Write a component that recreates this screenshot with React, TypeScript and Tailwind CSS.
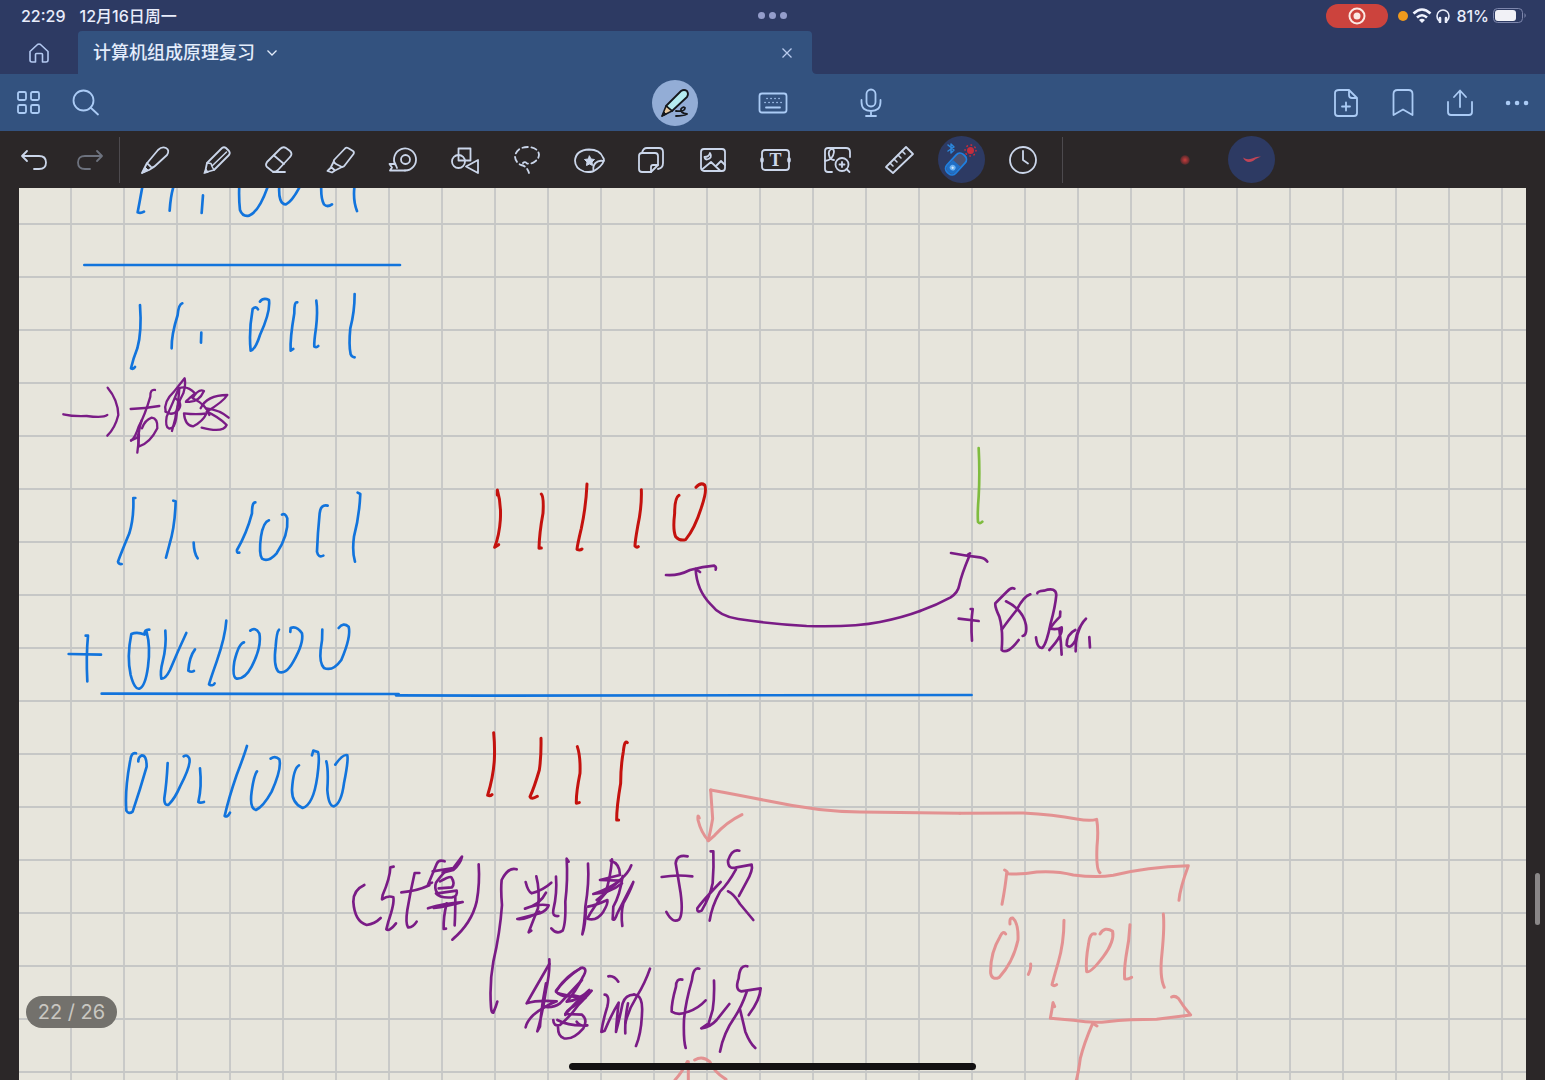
// Note taking screen: status bar, document tab, toolbars and a grid paper page with ink

import type { ReactNode } from "react";

const BLUE = "#1274dc";
const RED = "#c4120e";
const PURPLE = "#7a1c86";
const PINK = "#e39292";
const GREEN = "#7fbc3f";

// Each group of strokes has its own origin on the paper; three units are one pixel
const ink = [
  {
    x: 31,
    y: -3,
    color: BLUE,
    width: 8,
    paths: [
      "M278 0 Q270 45 263 82 Q272 86 282 80",
      "M372 0 Q362 30 359 77",
      "M459 31 L455 84",
      "M568 0 Q566 40 570 75 Q578 96 597 92 Q628 80 655 0",
      "M688 0 Q684 58 708 58 Q728 48 752 0",
      "M814 0 Q812 40 822 58 Q832 68 846 58",
      "M914 0 Q908 45 921 78",
      "M103 240 L1050 240",
      "M270 360 Q276 440 262 490 Q250 520 243 550 Q250 554 255 546",
      "M397 355 Q386 358 383 390 Q364 450 365 490",
      "M454 443 L453 473",
      "M624 373 Q618 362 608 372 Q596 440 602 497 Q616 494 630 450 Q662 380 657 345 Q640 337 630 350",
      "M742 352 Q732 350 733 385 Q720 460 722 497 L730 492",
      "M799 347 Q804 380 798 430 Q792 470 793 485 Q800 489 805 483",
      "M914 327 Q914 380 901 430 Q896 480 902 508 Q906 517 914 517",
    ],
  },
  {
    x: 31,
    y: -3,
    color: PURPLE,
    width: 7,
    paths: [
      "M40 688 Q70 695 110 693 Q160 700 172 690",
      "M173 608 Q204 645 205 690 Q195 730 172 752",
      "M242 672 Q285 670 328 663",
      "M315 615 Q300 612 301 635 Q285 690 266 725 Q255 760 243 767",
      "M243 766 L262 758 Q272 720 262 803",
      "M275 706 Q262 745 266 785 Q300 775 322 730 Q324 700 305 698 Q285 705 276 730",
      "M347 680 Q340 650 372 620 L404 580 Q408 600 400 625 Q378 665 376 700 L366 738",
      "M347 680 Q365 695 385 675 Q400 655 376 640",
      "M386 610 Q370 650 350 695 Q345 725 356 730 Q375 735 380 690 Q386 640 388 612",
      "M386 610 Q412 600 435 625 Q400 655 410 650 Q445 655 462 618 Q445 610 428 640 Q470 660 478 690",
      "M402 685 Q405 722 430 724 Q458 710 470 685 Q440 690 402 685",
      "M452 670 Q470 630 532 630 Q520 650 470 680 Q505 695 530 720 Q520 745 455 728",
      "M470 670 Q510 675 536 698",
    ],
  },
  {
    x: 31,
    y: 282,
    color: BLUE,
    width: 8,
    paths: [
      "M256 84 L250 84 Q252 145 238 190 Q215 245 204 275 Q206 284 215 282",
      "M370 92 L377 94 Q375 170 358 225 L348 263",
      "M431 218 Q432 250 443 265",
      "M616 97 Q606 96 606 130 Q590 190 561 240 Q560 250 568 248",
      "M657 151 Q640 156 633 200 Q626 250 636 266 Q655 278 680 250 Q716 195 712 145 Q706 128 696 134",
      "M833 107 Q812 102 809 130 Q803 190 801 245 Q805 264 820 257",
      "M923 68 L931 72 Q928 140 912 200 Q906 245 915 275",
      "M56 552 L153 554",
      "M107 497 L114 497 Q108 560 112 634",
      "M298 479 Q282 478 284 494 Q262 484 244 492 Q230 560 242 615 Q254 660 268 656 Q286 650 294 590 Q302 530 290 486",
      "M346 482 Q350 530 338 575 Q330 605 334 626 Q346 628 360 600 Q385 540 409 489",
      "M435 538 Q418 560 415 602 Q424 608 432 603",
      "M529 452 Q526 500 500 575 Q484 620 477 643 Q488 650 494 640",
      "M582 517 Q566 520 553 575 Q546 622 560 626 Q585 628 605 590 Q636 530 628 490 Q616 470 601 482",
      "M687 479 Q680 485 677 530 Q670 585 684 604 Q706 618 730 575 Q762 520 756 490 Q740 466 722 474 L721 486",
      "M817 479 Q818 510 812 540 Q808 580 822 594 Q848 606 874 570 Q904 500 896 470 Q880 456 866 474",
      "M155 671 L1046 672",
      "M1038 676 L1300 677 L2765 675",
      "M258 850 Q244 846 241 870 Q224 960 229 1022 Q236 1034 248 1025 Q270 960 290 890 Q290 855 275 856 Q264 862 265 874",
      "M353 879 Q350 940 343 985 Q342 1008 356 1004 Q375 985 390 950 Q424 885 418 865 Q412 852 401 859",
      "M450 895 Q456 950 445 996 Q450 1000 462 996",
      "M591 828 Q585 850 560 915 Q536 985 524 1038 Q532 1044 540 1028",
      "M621 904 Q612 915 605 965 Q598 1016 618 1020 Q640 1010 665 965 Q696 895 688 868 Q676 856 662 866",
      "M747 886 Q730 895 726 960 Q726 1000 758 1014 Q790 1005 802 920 Q810 860 804 846 L790 842 L786 856",
      "M829 874 Q836 900 832 960 Q836 1010 852 1009 Q874 1000 882 940 Q896 870 892 856 Q880 850 856 884",
    ],
  },
  {
    x: 451,
    y: 282,
    color: RED,
    width: 9,
    paths: [
      "M82 75 L82 60 Q94 100 91 150 Q88 195 74 232 L86 224",
      "M214 72 Q222 80 219 130 Q208 190 207 235 L214 234",
      "M351 42 Q348 110 334 175 Q322 225 321 238 Q330 242 336 237",
      "M514 59 Q516 110 503 170 Q495 215 495 228 Q500 234 505 230",
      "M627 76 Q614 84 614 130 Q608 180 617 200 Q630 214 647 209 Q675 175 695 110 Q712 60 704 45 Q692 36 678 52",
      "M71 788 Q75 830 73 870 Q70 920 53 976 Q60 980 66 974",
      "M213 805 Q214 860 208 900 Q192 955 180 980 Q184 990 202 979",
      "M322 830 Q332 860 330 910 Q318 970 319 1000 L328 998",
      "M472 818 Q464 808 460 845 Q452 890 452 940 Q440 1010 440 1050 L446 1050",
    ],
  },
  {
    x: 451,
    y: 282,
    color: PURPLE,
    width: 8,
    paths: [
      "M588 315 Q625 318 660 300 Q700 290 733 287 Q740 290 737 299",
      "M690 306 L677 297 Q680 360 722 403 Q750 440 805 447 Q900 462 1010 468 Q1150 472 1230 456 Q1300 442 1350 423",
    ],
  },
  {
    x: 901,
    y: 242,
    color: PURPLE,
    width: 8,
    paths: [
      "M0 543 Q50 525 92 502 Q114 488 118 465 Q124 435 148 378",
      "M93 369 Q140 378 180 382 Q196 385 202 395",
      "M144 374 L150 370",
      "M116 566 Q150 570 176 573",
      "M152 537 L158 537 Q152 580 156 632",
      "M283 476 Q274 470 262 484 L226 520 Q224 530 238 560 Q250 600 245 660 Q262 675 296 630",
      "M258 514 Q310 540 318 585 Q322 615 308 618",
      "M331 493 Q310 500 290 540 Q262 575 246 598",
      "M352 490 Q352 484 372 482 Q408 470 409 495 Q406 530 392 580 Q380 640 368 653 Q352 658 348 622",
      "M421 545 L420 560 Q400 580 390 596 Q412 600 425 592 Q430 615 388 660 M418 598 Q424 640 425 674",
      "M466 600 Q440 612 440 645 Q450 660 466 632 Q474 590 498 566 Q482 580 472 615 Q466 640 467 664",
      "M508 621 L510 652",
    ],
  },
  {
    x: 901,
    y: 242,
    color: GREEN,
    width: 8,
    paths: ["M176 54 Q180 130 176 200 Q172 250 174 276 Q180 283 187 275"],
  },
  {
    x: 321,
    y: 652,
    color: PURPLE,
    width: 8,
    paths: [
      "M73 135 Q40 150 40 185 Q44 245 80 255 Q104 252 122 234",
      "M161 80 L151 82 Q150 115 128 165 L126 178 Q145 165 160 172 Q164 190 145 245 L139 268 Q148 276 168 250",
      "M238 99 L224 99 Q212 150 202 210 Q196 250 204 262 Q218 264 230 245",
      "M184 157 Q230 154 268 136",
      "M314 64 Q296 58 290 72 L264 134 L276 128",
      "M278 94 L340 84 L366 50 Q362 70 340 90 L308 98",
      "M322 88 Q300 110 288 128 Q282 145 292 160 L350 152 Q354 170 336 172 Q300 175 288 160",
      "M300 124 Q330 108 334 112 Q346 130 336 142 L296 145",
      "M264 205 Q310 190 368 186 Q320 200 282 204",
      "M320 190 Q310 230 311 267 L318 266 M346 172 Q346 220 344 256",
      "M416 73 Q420 130 410 185 Q395 250 337 299 L346 290",
      "M530 88 Q505 80 485 120 Q482 150 486 195 Q480 280 460 365 Q448 430 453 500 Q454 520 460 518 Q468 500 472 485",
      "M557 126 Q564 155 575 160 Q610 150 634 128",
      "M589 109 Q600 150 594 205 L566 277 L574 272",
      "M555 206 Q600 195 618 158 M555 206 Q595 190 626 196 Q622 210 600 220 L532 237 Q560 240 598 215",
      "M648 110 Q652 160 640 210 Q636 230 655 228",
      "M686 65 L680 56 Q684 120 676 185 Q678 250 668 272 Q650 285 634 265",
      "M628 358 Q630 400 618 450 Q608 520 592 574 L600 560 Q604 500 618 430",
      "M628 372 Q600 420 560 490 Q590 480 650 484 Q610 500 580 525 Q560 545 557 562",
      "M722 384 Q670 420 648 455 Q670 475 700 466 L736 474",
      "M610 500 Q640 505 660 490 L726 420",
      "M640 540 Q640 560 660 555 Q690 530 715 495 Q740 470 755 452",
    ],
  },
  {
    x: 541,
    y: 652,
    color: PURPLE,
    width: 8,
    paths: [
      "M84 71 Q88 130 76 200 Q74 250 67 283 Q76 260 78 205",
      "M156 58 Q152 110 136 160 Q100 200 82 236 Q110 245 130 215 Q145 190 142 180 Q110 195 84 200",
      "M152 62 Q180 70 180 105 L120 120 L180 122 Q140 150 100 162 Q150 160 186 130",
      "M214 76 Q205 100 180 120 Q150 150 110 180",
      "M188 108 Q180 165 160 200 L158 238 Q164 244 172 220 L220 126 Q210 155 190 190 Q182 220 187 258",
      "M305 111 Q350 103 397 109",
      "M383 49 Q350 42 347 70 Q354 110 362 160 Q370 220 358 238 Q338 252 319 216",
      "M452 34 L460 34 Q462 80 458 130 Q450 170 425 212 Q410 220 412 205 Q430 180 482 126",
      "M538 32 Q516 26 504 62 Q504 90 530 82 L575 74 Q580 90 560 125 L537 168",
      "M528 88 Q505 130 480 155 Q455 200 449 242",
      "M504 154 Q520 160 540 192 L580 240",
      "M-12 452 Q20 405 66 383 Q85 385 68 412 Q50 450 20 485 Q60 480 88 450 Q70 480 40 500 Q20 510 16 525",
      "M-6 460 L60 475 L16 522 L66 524 Q84 540 70 565 Q40 600 12 595 Q-6 590 -6 562",
      "M-8 540 Q30 560 82 556 Q60 560 50 545",
      "M145 409 Q162 406 175 425",
      "M134 464 Q150 465 142 500 Q128 545 124 576 L134 572 Q156 520 176 488 Q170 540 168 576 Q180 530 188 490 Q196 465 222 464",
      "M204 490 Q194 540 196 580",
      "M270 386 Q255 430 230 470 Q205 510 196 550",
      "M222 464 Q250 465 246 520 Q244 580 228 618",
      "M367 419 Q348 414 348 440 Q334 490 335 515 Q355 528 385 515 Q415 505 437 481",
      "M418 386 Q400 380 396 420 Q376 490 372 540 Q370 600 377 624",
      "M462 422 Q464 470 458 510 L446 550 L424 565 Q450 562 470 540 L508 492",
      "M562 379 Q540 372 536 415 Q524 450 544 454 L602 445 Q600 480 566 525",
      "M560 456 Q545 500 525 530 Q490 580 480 635",
      "M540 508 Q548 540 556 575 Q570 610 586 624",
    ],
  },
  {
    x: 541,
    y: 652,
    color: PINK,
    width: 9,
    paths: [
      "M345 720 Q364 700 382 665",
      "M385 665 L385 720",
      "M404 660 Q428 646 450 666 Q462 696 498 718",
      "M452 -150 L458 -64 Q450 -18 444 2",
      "M418 -66 Q412 -80 414 -60 Q424 -20 446 2 L464 -14 Q500 -54 546 -76",
      "M452 -150 Q530 -136 630 -116 Q780 -84 900 -84 L1200 -80",
    ],
  },
  {
    x: 941,
    y: 592,
    color: PINK,
    width: 9,
    paths: [
      "M0 100 L190 99 Q280 104 350 117 Q390 124 410 118 Q416 150 411 200 Q408 270 420 278",
      "M134 270 Q144 275 142 281 Q180 285 230 276 Q290 272 340 285 Q410 294 460 286 Q560 260 685 257 Q660 325 657 361",
      "M140 280 Q136 320 126 373",
      "M137 462 Q130 450 120 470 Q90 520 92 580 Q96 602 118 592 Q160 545 174 480 Q176 430 158 414 Q148 412 150 432",
      "M212 552 Q214 565 205 583",
      "M312 421 Q312 490 294 550 Q282 590 276 614 Q282 620 290 614",
      "M406 462 Q390 456 386 490 Q376 545 380 575 Q392 580 430 530 Q464 485 458 454 Q434 438 420 462",
      "M510 434 Q508 480 498 530 Q492 570 494 596 Q500 600 515 592",
      "M610 402 Q614 440 606 520 Q598 590 613 622",
      "M284 680 L279 668 Q276 690 271 715 L340 721 Q400 730 440 725 Q510 718 590 718 L692 705 Q670 680 655 655 Q645 646 635 651",
      "M411 738 L398 730 Q372 790 361 835 Q355 880 348 905",
    ],
  },
];

// Line icon on a 28px box
function Icon({ children, className = "" }: { children: ReactNode; className?: string }) {
  return (
    <svg
      viewBox="0 0 28 28"
      className={`size-7 overflow-visible ${className}`}
      fill="none"
      stroke="currentColor"
      strokeWidth={1.8}
      strokeLinecap="round"
      strokeLinejoin="round"
      aria-hidden
    >
      {children}
    </svg>
  );
}

const tools = [
  {
    name: "钢笔",
    icon: (
      <>
        <path d="M7 16 17 4q4-4 8-2t1 7L14 20q-2 2-4 1l-2-2q-2-1-1-3Z" />
        <path d="m6 17-2 4-3 6 7-3 4-2.500" />
        <path d="m1 27 3-6 3 3Z" fill="currentColor" strokeWidth={1} />
      </>
    ),
  },
  {
    name: "铅笔",
    icon: (
      <>
        <path d="M4 17 19 2q2-1.500 4 0l3 3q1.500 2 0 4L11 24l-9 2.500Z" />
        <path d="m4 17 4 .5 1 3 2 3.500M9 20 23.500 6" strokeWidth={1.5} />
        <path d="m1 27 2-4 2 3Z" fill="currentColor" strokeWidth={1} />
      </>
    ),
  },
  {
    name: "橡皮",
    icon: (
      <>
        <path d="M2 16 15 3q3-3 6-1l4 3q3 3 0 6L13 24q-3 3-6 1l-5-4q-2-2 0-5Z" />
        <path d="m9 9.500 10 8.500M8 26h12" />
      </>
    ),
  },
  {
    name: "荧光笔",
    icon: (
      <>
        <path d="M7 14 18 2.500q1.500-1.500 3-.5l5 3q1.500 1 .5 3L18 19q-1 2-3 2l-6-3q-3-1.500-2-4Z" />
        <path d="m6.500 16-2.500 5 4 3.500 7-3.500M4 21.500.5 25l4.500 1.500L8 24.500" />
      </>
    ),
  },
  {
    name: "胶带",
    icon: (
      <>
        <path d="M16 24.500H1l2-3-2.500-3.500H6" />
        <path d="M6.500 19A11 11 0 1 1 16 24.500M6 17l2 5" />
        <circle cx="16.500" cy="13.500" r="4.500" />
      </>
    ),
  },
  {
    name: "形状",
    icon: (
      <>
        <path d="M7.500 2.500h12v12h-12Z" />
        <circle cx="7.500" cy="15.500" r="6.500" />
        <path d="m15 20.500 12-6.500v13Z" />
      </>
    ),
  },
  {
    name: "套索",
    icon: (
      <path
        d="M10 17q2-2 4 .5 5 .5 8-2 4-3 4-7-1-7-11-7.500Q4 1 2 10q0 6 6 9 6 1 8 8"
        strokeDasharray="5.500 3.500"
      />
    ),
  },
  {
    name: "贴纸",
    icon: (
      <>
        <path d="M18 25.500q-5 1-9 0-9-3-9-11Q1 4 14 3.500q11 0 14 8 1 1 1 3-2 6-11 11Z" />
        <path d="M18.500 25q-1-5 2-8 3-3 8-2" />
        <path d="m14.500 10 1.500 3 3.500.5-2.500 2.500.5 3.500-3-1.500-3 1.500.5-3.500L9.500 13.500l3.500-.5Z" fill="currentColor" strokeWidth={1} />
      </>
    ),
  },
  {
    name: "便签",
    icon: (
      <>
        <path d="M14 26H5q-3 0-3-3V10q0-3 3-3h13q3 0 3 3v9Z" />
        <path d="M14 26v-5q0-2 2-2h5M5 7q1-5 5-5h12q4 0 4 4v11q0 5-5 6" />
      </>
    ),
  },
  {
    name: "图片",
    icon: (
      <>
        <rect x="2" y="3" width="24" height="22" rx="3" />
        <path d="M3 23.500 12 16l9 8.500M17 20l5-5 4 4" />
        <path d="M11 7q3 5-3 6.500-2 0-2.500-2.500Q10 11 11 7Z" />
      </>
    ),
  },
  {
    name: "文本",
    icon: (
      <>
        <rect x="1" y="4" width="27" height="20" rx="3" />
        <path d="M1 13v2M28 13v2" strokeWidth={3.5} />
        <text x="14.500" y="20" textAnchor="middle" fill="currentColor" stroke="none" className="font-['Liberation_Serif',serif] text-[18px] font-bold">
          T
        </text>
      </>
    ),
  },
  {
    name: "查找图像",
    icon: (
      <>
        <path d="M9 26H5q-3 0-3-3V5q0-3 3-3h18q4 0 4 4v5" />
        <path d="M2 15q8-1 9-9 0-3-2-3-4 1-3 6 1 5 5 5" />
        <circle cx="19" cy="18.500" r="6.500" />
        <path d="M19 16v5M16.500 18.500h5M23.500 23l3 3" />
      </>
    ),
  },
  {
    name: "直尺",
    icon: (
      <>
        <path d="m1 21 20-20 7 7L8 27Z" />
        <path d="m5 17 3 3m1-7 3 3m1-7 3 3m1-7 3 3" strokeWidth={1.6} />
      </>
    ),
  },
  { name: "激光笔", active: true, icon: <LaserDrawing /> },
  {
    name: "最近使用",
    icon: (
      <>
        <circle cx="14" cy="14" r="13" />
        <path d="M14 5v9l5 3.500" />
      </>
    ),
  },
];

function LaserDrawing() {
  return (
    <>
      <g transform="rotate(-48 9 18)">
        <rect x="-3" y="12" width="24" height="12" rx="5" fill="#4a5272" stroke="#1f7fe0" />
        <path d="M2 13h8v10H2q-4 0-4-5t4-5Z" fill="#1f6fc6" stroke="none" />
        <circle cx="4" cy="18" r="2" fill="#d8e9fa" stroke="#6cb2f2" />
      </g>
      <path d="m1-1 6 5-3 3v-9l3 3-6 4" stroke="#2b86dc" strokeWidth={1.5} />
      <circle cx="23.500" cy="4.500" r="3.500" fill="#c42d3c" stroke="none" />
      <circle cx="23.500" cy="4.500" r="5.500" stroke="#c42d3c" strokeDasharray="0.500 3.800" strokeWidth={1.6} />
    </>
  );
}

function StatusBar() {
  return (
    <header className="relative flex h-[31px] shrink-0 items-center justify-between bg-[#2d3a63] pl-[21px] pr-[18px] text-base font-medium text-[#e9edfb]">
      <div className="flex gap-3.5">
        <span>22:29</span>
        <span>12月16日周一</span>
      </div>
      <div className="absolute inset-x-0 flex justify-center gap-1">
        <i className="size-[7px] rounded-full bg-[#949dcb]" />
        <i className="size-[7px] rounded-full bg-[#949dcb]" />
        <i className="size-[7px] rounded-full bg-[#949dcb]" />
      </div>
      <div className="flex items-center">
        <div className="mr-2.5 flex h-6 w-[62px] items-center justify-center rounded-full bg-[#cc433d]">
          <svg viewBox="0 0 18 18" className="size-[18px]" aria-hidden>
            <circle cx="9" cy="9" r="7.500" fill="none" stroke="#fbe9e4" strokeWidth="2" />
            <circle cx="9" cy="9" r="3.500" fill="#fbe9e4" />
          </svg>
        </div>
        <i className="mr-1 size-2.5 rounded-full bg-[#f09a1c]" />
        <svg viewBox="0 0 20 15" className="mr-1 h-[15px] w-5" fill="none" stroke="#f1f4ff" strokeWidth="2.600" aria-hidden>
          <path d="M1.500 5.500q8.500-8 17 0M5 9.500q5-4.500 10 0" />
          <path d="m7 12 3 3 3-3q-3-2.500-6 0Z" fill="#f1f4ff" stroke="none" />
        </svg>
        <svg viewBox="0 0 14 14" className="mr-1.5 size-3.5" fill="none" stroke="#e9edfb" strokeWidth="1.600" aria-hidden>
          <path d="M3 12Q1 10 1 7a6 6 0 0 1 12 0q0 3-2 5" />
          <path d="M4 9v4M10 9v4" strokeWidth="2.600" strokeLinecap="round" />
        </svg>
        <span className="mr-1">81%</span>
        <svg viewBox="0 0 34 15" className="h-[15px] w-[34px]" aria-hidden>
          <rect x="0.500" y="0.500" width="29" height="14" rx="4" fill="none" stroke="#7d86ac" />
          <rect x="2" y="2" width="21" height="11" rx="3" fill="#f1f1f6" />
          <path d="M31.500 5q2.500 2.500 0 5Z" fill="#7d86ac" />
        </svg>
      </div>
    </header>
  );
}

function TabBar() {
  return (
    <div className="grid h-[43px] shrink-0 grid-cols-[78px_1fr_1fr] bg-[#2d3a63]">
      <button aria-label="主页" className="flex items-center justify-center text-[#b3c8f0]">
        <svg viewBox="0 0 20 20" className="size-5" fill="none" stroke="currentColor" strokeWidth="1.600" strokeLinejoin="round" aria-hidden>
          <path d="M1 8.500 8.500 1.500q1.500-1 3 0L19 8.500V17q0 2-2 2h-3.500v-7.500q0-1-1-1h-5q-1 0-1 1V19H3q-2 0-2-2Z" />
        </svg>
      </button>
      <div className="relative flex items-center justify-between rounded-t bg-[#33527f] pl-[15px] pr-5">
        <button className="flex items-center gap-3 text-lg font-medium text-[#e3ecfb]">
          计算机组成原理复习
          <svg viewBox="0 0 10 6" className="h-1.5 w-2.5" fill="none" stroke="currentColor" strokeWidth="1.300" aria-hidden>
            <path d="m0.500 0.500 4.500 4.500 4.500-4.500" />
          </svg>
        </button>
        <button aria-label="关闭标签页" className="text-[#b9cbee]">
          <svg viewBox="0 0 10 10" className="size-2.5" fill="none" stroke="currentColor" strokeWidth="1.300" aria-hidden>
            <path d="m0.500 0.500 9 9m0-9-9 9" />
          </svg>
        </button>
        {/* Flared foot of the tab */}
        <svg viewBox="0 0 5 5" className="absolute -right-[5px] bottom-0 size-[5px]" aria-hidden>
          <path d="M0 0q0 5 5 5H0Z" fill="#33527f" />
        </svg>
      </div>
    </div>
  );
}

function NavBar() {
  return (
    <nav className="flex h-[57px] shrink-0 items-center bg-[#33527f] text-[#abcbf5]">
      <div className="flex flex-1">
        <button aria-label="缩略图" className="flex w-[57px] justify-center">
          <Icon>
            <rect x="3" y="3" width="8" height="8" rx="1.500" />
            <rect x="16" y="3" width="8" height="8" rx="1.500" />
            <rect x="3" y="16" width="8" height="8" rx="1.500" />
            <rect x="16" y="16" width="8" height="8" rx="1.500" />
          </Icon>
        </button>
        <button aria-label="搜索" className="flex w-[57px] justify-center">
          <Icon>
            <circle cx="11.500" cy="11.500" r="10" />
            <path d="m18.500 18.500 7.500 7" />
          </Icon>
        </button>
      </div>

      <div className="flex items-center">
        <button aria-label="书写" aria-pressed className="flex w-[98px] justify-center">
          <span className="flex size-[46px] items-center justify-center rounded-full bg-[#93add6] text-[#15181c]">
            <Icon>
              <path d="M5 17 20 2q3-2 6 0 2 3 0 6L11 22Z" fill="#b5ecf0" />
              <path d="m5 17-4 10 10-5Z" fill="#e8c9a0" strokeWidth={1.6} />
              <path d="m1 27 2-4 2 2Z" fill="currentColor" strokeWidth={1} />
              <path d="M15 22q9 1 9-3-2-2-4 1-1 4 6 5-4 2-11 2" strokeWidth={1.8} />
            </Icon>
          </span>
        </button>
        <button aria-label="键盘" className="flex w-[98px] justify-center">
          <Icon>
            <rect x="0.500" y="4.500" width="27" height="19" rx="2.500" />
            <path d="M8 9.500h.1M12 9.500h.1M16 9.500h.1M20 9.500h.1M6 13.500h.1M10 13.500h.1M14 13.500h.1M18 13.500h.1M22 13.500h.1" strokeWidth={1.6} />
            <path d="M7 18.500h14" />
          </Icon>
        </button>
        <button aria-label="录音" className="flex w-[98px] justify-center">
          <Icon>
            <rect x="9.500" y="0.500" width="9" height="17" rx="4.500" />
            <path d="M4.500 11v2q0 9 9.500 9t9.500-9v-2M14 22v5M9 27h10" />
          </Icon>
        </button>
      </div>

      <div className="flex flex-1 justify-end">
        <button aria-label="添加页面" className="flex w-[57px] justify-center">
          <Icon>
            <path d="M7 1h10l8 8v15q0 3-3 3H6q-3 0-3-3V4q0-3 4-3ZM17 1v5q0 3 3 3h5" />
            <path d="M14 13.500v8M10 17.500h8" />
          </Icon>
        </button>
        <button aria-label="书签" className="flex w-[57px] justify-center">
          <Icon>
            <path d="M4.500 26V5q0-4 4-4h11q4 0 4 4v21L14 20.500Z" />
          </Icon>
        </button>
        <button aria-label="分享" className="flex w-[57px] justify-center">
          <Icon>
            <path d="M2 13v10q0 3 3 3h18q3 0 3-3V13M14 18V2M8 8l6-6.500L20 8" />
          </Icon>
        </button>
        <button aria-label="更多" className="flex w-[57px] justify-center">
          <Icon>
            <path d="M5 14h.1M14 14h.1M23 14h.1" strokeWidth={4.5} />
          </Icon>
        </button>
      </div>
    </nav>
  );
}

function ToolBar() {
  return (
    <div className="flex h-[57px] shrink-0 items-center bg-[#2b2728] pl-1.5 text-[#cbd6ea]">
      <button aria-label="撤销" className="flex w-14 justify-center">
        <Icon>
          <path d="M7 5 2 10l5 5M2 10h17q7 0 7 6.500T19 23h-5" />
        </Icon>
      </button>
      <button aria-label="重做" className="flex w-14 justify-center text-[#6d727e]">
        <Icon>
          <path d="m21 5 5 5-5 5M26 10H9q-7 0-7 6.500T9 23h5" />
        </Icon>
      </button>
      <i className="ml-px mr-1 h-[46px] w-px bg-[#4d4a4e]" />

      {tools.map((tool) => (
        <button key={tool.name} aria-label={tool.name} aria-pressed={!!tool.active} className="flex w-[62px] justify-center">
          <span className={tool.active ? "flex size-[47px] items-center justify-center rounded-full bg-[#2d3a63]" : "flex size-[47px] items-center justify-center"}>
            <Icon>{tool.icon}</Icon>
          </span>
        </button>
      ))}

      <i className="ml-2 h-[46px] w-px bg-[#4d4a4e]" />
      <button aria-label="激光点" className="ml-[88px] flex w-[67px] justify-center">
        <i className="size-2.5 rounded-full bg-[radial-gradient(#b83a3a_10%,#6a2c2e_55%,#2b2728_75%)]" />
      </button>
      <button aria-label="激光轨迹" aria-pressed className="flex w-[67px] justify-center">
        <span className="flex size-[47px] items-center justify-center rounded-full bg-[#2d3a63]">
          <svg viewBox="0 0 20 8" className="h-2 w-5" aria-hidden>
            <path d="M1 1.500q4 3 9 1 4-2 9-2-5 2-8 4.500-7 3-10-3.500Z" fill="#c04456" />
          </svg>
        </span>
      </button>
    </div>
  );
}

function Paper() {
  return (
    <main className="relative min-h-0 flex-1 bg-[#2b2728] px-[19px]">
      <svg className="block h-full w-full bg-[#e7e5dc]" role="img" aria-label="手写笔记">
        <defs>
          <pattern id="grid" x="51" y="35" width="53" height="53" patternUnits="userSpaceOnUse">
            <path d="M1 0v53M0 1h53" stroke="#c6c7c6" strokeWidth="1.800" />
          </pattern>
        </defs>
        <rect width="100%" height="100%" fill="url(#grid)" />
        {ink.map((group, i) => (
          <g
            key={i}
            transform={`translate(${group.x} ${group.y}) scale(0.3333)`}
            fill="none"
            stroke={group.color}
            strokeWidth={group.width}
            strokeLinecap="round"
            strokeLinejoin="round"
          >
            {group.paths.map((d) => (
              <path key={d} d={d} />
            ))}
          </g>
        ))}
      </svg>

      {/* Page counter, scroll thumb and home indicator float over the paper */}
      <div className="absolute bottom-[52px] left-[26px] flex h-8 w-[91px] items-center justify-center rounded-2xl bg-[#73716c] text-xl text-[#c9c7c1]">
        22 / 26
      </div>
      <div className="absolute bottom-[155px] right-[5px] h-[52px] w-[5px] rounded-full bg-[#8a8788]" />
      <div className="absolute inset-x-0 bottom-2.5 flex justify-center">
        <div className="h-[7px] w-[407px] rounded-full bg-[#131112]" />
      </div>
    </main>
  );
}

export default function App() {
  return (
    <div className="flex h-screen flex-col overflow-hidden font-['Inter','Noto_Sans_CJK_SC',sans-serif]">
      <StatusBar />
      <TabBar />
      <NavBar />
      <ToolBar />
      <Paper />
    </div>
  );
}
